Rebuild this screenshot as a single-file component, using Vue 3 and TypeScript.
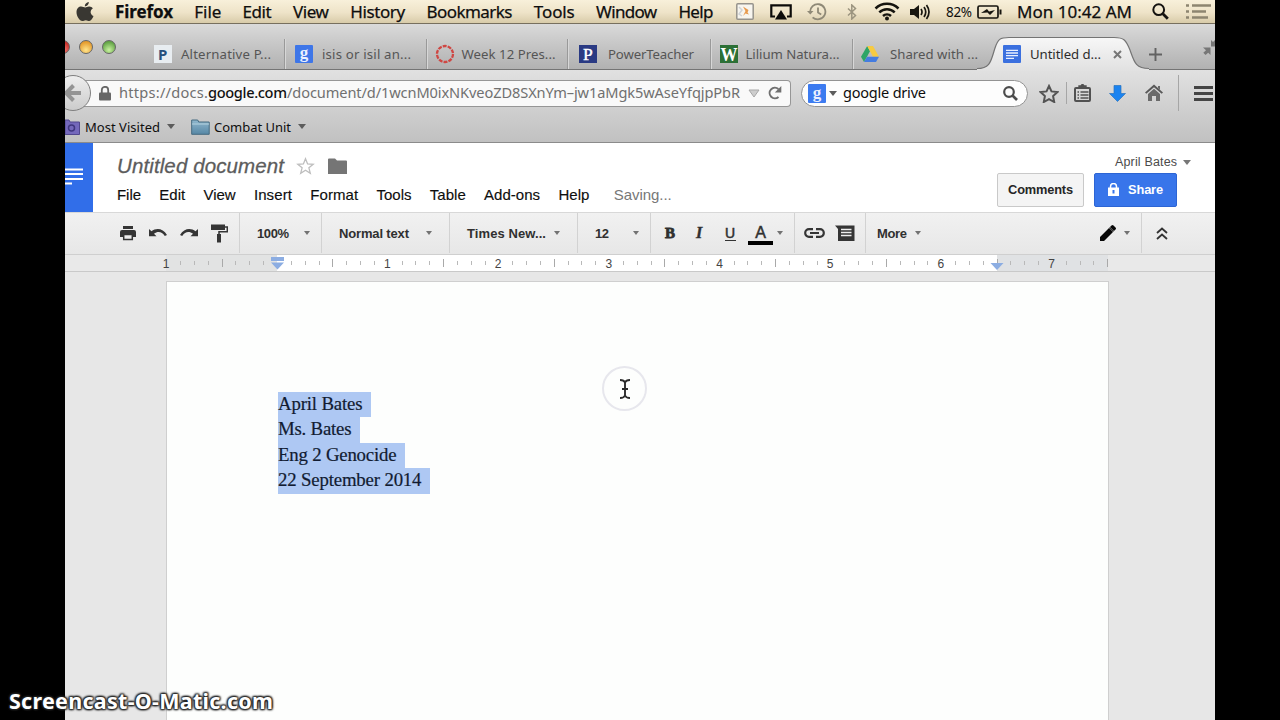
<script setup lang="ts">
import type { Directive } from 'vue'

// Tracks a label out (or in) so that it fills the given width in pixels.
const vFit: Directive<HTMLElement, number> = {
  mounted(el, { value }) {
    const natural = el.getBoundingClientRect().width
    const count = (el.textContent ?? '').trim().length
    el.style.letterSpacing = `${(value - natural) / Math.max(count - 1, 1)}px`
    el.style.width = `${value}px`
  },
}

const macMenus: [string, number][] = [
  ['Firefox', 58], ['File', 27], ['Edit', 29], ['View', 36], ['History', 55],
  ['Bookmarks', 86], ['Tools', 41], ['Window', 61], ['Help', 35],
]

interface Tab { icon: string; label: string; width: number }
const tabs: Tab[] = [
  { icon: 'pbs', label: 'Alternative P...', width: 90 },
  { icon: 'google', label: 'isis or isil an...', width: 89 },
  { icon: 'ring', label: 'Week 12 Pres...', width: 94 },
  { icon: 'power', label: 'PowerTeacher', width: 86 },
  { icon: 'wiki', label: 'Lilium Natura...', width: 94 },
  { icon: 'drive', label: 'Shared with ...', width: 88 },
]

const docMenus: [string, number][] = [
  ['File', 24], ['Edit', 26], ['View', 32], ['Insert', 38], ['Format', 48],
  ['Tools', 35], ['Table', 36], ['Add-ons', 56], ['Help', 31],
]

const lines: [string, number, number][] = [
  ['April Bates', 84.5, 93], ['Ms. Bates', 73.5, 82], ['Eng 2 Genocide', 118.5, 127], ['22 September 2014', 143.5, 152],
]

const inch = 110.7
const origin = 212
const labels = [-1, 1, 2, 3, 4, 5, 6, 7].map((n) => ({ n: Math.abs(n), x: origin - 0.3 + n * inch }))
const ticks = Array.from({ length: 69 }, (_, i) => i - 8)
  .filter((i) => i % 8 !== 0 && i < 61)
  .map((i) => ({ x: Math.round(origin + (i * inch) / 8) + 0.5, tall: i % 4 === 0 }))
</script>

<template>
  <div class="frame">
    <main class="screen">
      <header class="macbar">
        <svg class="apple" width="18" height="20" viewBox="0 0 18 20"><path d="M12.8 0c.2 2-1.600 4.300-4 4.400C8.600 2.200 10.600.4 12.800 0zM9.300 5.500c1-.1 2.200-1 4-.9 1.500.1 2.700.7 3.500 1.800-3.200 2-2.700 6.200.7 7.500-.8 2.200-2.400 5-4.200 5.100-1.300 0-1.800-.8-3.500-.8s-2.200.8-3.400.8C3.500 19 .5 14.300.5 10.300c0-3.700 2.300-5.700 4.700-5.700 1.600 0 2.900.9 4.100.9z" fill="#393732"/></svg>
        <nav class="mac-menus">
          <span v-for="[name, w] in macMenus" :key="name" v-fit="w" :class="{ strong: name === 'Firefox' }">{{ name }}</span>
        </nav>
        <div class="mac-status">
          <svg width="18" height="17" viewBox="0 0 18 17"><rect x=".8" y=".8" width="16.400" height="15.400" rx="1" fill="#f7f5ef" stroke="#96938c" stroke-width="1.500"/><path d="M3 4l3 3-3 4 3 2" stroke="#d0d3d6" stroke-width="1.500" fill="none"/><path d="M7 3.500l5.500 3.500-1 2.500 1.500 2-3.500-1L7 13l2.500-5z" fill="#e79a4e"/></svg>
          <svg class="airplay" width="22" height="16" viewBox="0 0 22 16"><path d="M5 12.500H1.300V1.300h19.400v11.200H17" fill="none" stroke="#0c0b09" stroke-width="2.200"/><path d="M11 6l6 9.500H5z" fill="#0c0b09"/></svg>
          <svg class="history" width="20" height="18" viewBox="0 0 20 18"><path d="M3.200 9.500a7.600 7.600 0 1 1 2.400 4.800M11 4.500V9.500l3.200 2" fill="none" stroke="#8f8977" stroke-width="1.800"/><path d="M0 8h6.500L3.300 11.500z" fill="#8f8977"/></svg>
          <svg class="bluetooth" width="10" height="16" viewBox="0 0 10 16"><path d="M1 4.500l7.500 7L4.800 15V1l3.700 3.500L1 11.500" fill="none" stroke="#9b947f" stroke-width="1.500"/></svg>
          <svg class="wifi" width="26" height="19" viewBox="0 0 26 19"><g fill="none" stroke="#16140f" stroke-width="2.500"><path d="M1.500 6.500a16.500 16.500 0 0 1 23 0M5.300 10.300a11 11 0 0 1 15.400 0M9 14a5.800 5.800 0 0 1 8 0"/></g><circle cx="13" cy="16.600" r="2" fill="#16140f"/></svg>
          <svg class="volume" width="21" height="16" viewBox="0 0 21 16"><path d="M0 5h4l5-4v14l-5-4H0z" fill="#181610"/><path d="M11 5q2 3 0 6M14 3q3.500 5 0 10M16.500 1q5 7 0 14" fill="none" stroke="#181610" stroke-width="1.700"/></svg>
          <span v-fit="26" class="percent">82%</span>
          <svg class="battery" width="25" height="14" viewBox="0 0 25 14"><rect x="1" y="1" width="20" height="12" rx="1.500" fill="none" stroke="#17150f" stroke-width="1.700"/><path d="M22.500 4.500h2v5h-2zM4 8l6-4 2 2.500L18 5l-5 5-2.500-2.500z" fill="#17150f"/></svg>
          <span v-fit="115" class="clock">Mon 10:42 AM</span>
          <svg class="spotlight" width="17" height="17" viewBox="0 0 17 17"><circle cx="6.700" cy="6.700" r="5.400" fill="none" stroke="#151310" stroke-width="2"/><path d="M10.800 10.800l5 5" stroke="#151310" stroke-width="2.800"/></svg>
          <svg class="notify" width="25" height="17" viewBox="0 0 25 17"><path d="M0 2.500h3M0 8.500h3M0 14.500h3M6 2.500h19M6 8.500h14M6 14.500h16" stroke="#8d8570" stroke-width="2.600"/></svg>
        </div>
      </header>

      <div class="tabstrip">
        <div class="lights"><i class="red"></i><i class="amber"></i><i class="green"></i></div>
        <div v-for="tab in tabs" :key="tab.label" class="tab" :class="tab.icon">
          <svg v-if="tab.icon === 'pbs'" class="fav" viewBox="0 0 18 18"><rect width="18" height="18" fill="#e8edf1"/><text x="4" y="15" class="pbs-letter">P</text></svg>
          <svg v-else-if="tab.icon === 'google'" class="fav" viewBox="0 0 18 18"><rect width="18" height="18" rx="1" fill="#3e76e8"/><text x="9" y="13" class="g-letter">g</text></svg>
          <svg v-else-if="tab.icon === 'ring'" class="fav" viewBox="0 0 18 18"><circle cx="9" cy="9" r="8" fill="none" stroke="#cf4743" stroke-width="2.300" stroke-dasharray="3.900 1.126"/></svg>
          <svg v-else-if="tab.icon === 'power'" class="fav" viewBox="0 0 18 18"><rect width="18" height="18" fill="#2a3a83"/><text x="4" y="15" class="pt-letter">P</text></svg>
          <svg v-else-if="tab.icon === 'wiki'" class="fav" viewBox="0 0 18 18"><rect width="18" height="18" fill="#2c7036"/><text x="0.500" y="15.500" class="w-letter" textLength="17" lengthAdjust="spacingAndGlyphs">W</text></svg>
          <svg v-else class="fav" viewBox="0 0 18 18"><path d="M6.200 1L0 11.800l3 5.200L9 6.200z" fill="#2da567"/><path d="M6.200 1h5.800l6 10.700h-6z" fill="#f6ca41"/><path d="M6 11.700h12L15 17H3z" fill="#447ce0"/></svg>
          <span v-fit="tab.width">{{ tab.label }}</span>
        </div>
        <div class="tab active">
          <svg class="tab-shape" width="174" height="35" viewBox="0 0 174 35"><defs><linearGradient id="tabfill" x2="0" y2="1"><stop offset="0" stop-color="#f7f7f7"/><stop offset="1" stop-color="#e1e1e1"/></linearGradient></defs><path d="M0 35V32.500C14 32.500 14 24 18 12C21 3 23 1.500 32 1.500H137C147 1.500 149 4 153 14C157 25 158 32.500 172 32.500V35z" fill="url(#tabfill)"/><path d="M0 32.500C14 32.500 14 24 18 12C21 3 23 1.500 32 1.500H137C147 1.500 149 4 153 14C157 25 158 32.500 172 32.500" fill="none" stroke="#747474" stroke-width="1.200"/></svg>
          <svg class="fav" viewBox="0 0 18 18"><rect width="18" height="18" rx="1" fill="#3b70df"/><path d="M3 5.300h12M3 8h12M3 10.700h12M3 13.300h8" stroke="#e9f0ff" stroke-width="1.300"/></svg>
          <span v-fit="71">Untitled d...</span>
          <svg class="close" width="9" height="9" viewBox="0 0 9 9"><path d="M1 1l7 7M8 1L1 8" stroke="#777" stroke-width="2"/></svg>
        </div>
        <svg class="plus" width="13" height="13" viewBox="0 0 13 13"><path d="M6.500 0v13M0 6.500h13" stroke="#626262" stroke-width="1.900"/></svg>
        <svg class="expand" width="14" height="17" viewBox="0 0 14 17"><path d="M0 8.500h7.500V16l-2.300-2.300L2.500 16 .3 13.800 3 11.200zM8 7.500V1l2 2 3-3 2 2-3 3 2.500 2.500z" fill="#777"/></svg>
      </div>

      <div class="navbar">
        <div class="urlbar">
          <div class="back"><svg width="18" height="18" viewBox="0 0 18 18"><path d="M9.500 1.500L2 9l7.500 7.500M2 9h15" fill="none" stroke="#949494" stroke-width="4"/></svg></div>
          <svg class="lock" width="12" height="15" viewBox="0 0 12 15"><rect y="6.500" width="12" height="8" rx="1" fill="#676767"/><path d="M2.800 7V4a3.200 3.200 0 0 1 6.400 0v3" fill="none" stroke="#676767" stroke-width="1.800"/></svg>
          <span class="url"><span v-fit="89">https://docs.</span><b v-fit="79">google.com</b><span v-fit="453">/document/d/1wcnM0ixNKveoZD8SXnYm–jw1aMgk5wAseYfqjpPbR</span></span>
          <svg class="drop" width="12" height="9" viewBox="0 0 12 9"><path d="M1 1h10L6 8z" fill="#cdcdcd" stroke="#a7a7a7"/></svg>
          <svg class="reload" width="14" height="14" viewBox="0 0 14 14"><path d="M10.500 10.900A5.300 5.300 0 1 1 10.400 3" fill="none" stroke="#707070" stroke-width="2"/><path d="M13.300 0v6.500H6.800z" fill="#707070"/></svg>
        </div>
        <div class="search">
          <svg class="g-icon" width="18" height="19" viewBox="0 0 18 19"><rect width="18" height="19" rx="1" fill="#3c7bf0"/><text x="9" y="13.500" class="g-letter">g</text></svg>
          <i class="caret"></i>
          <span v-fit="83">google drive</span>
          <svg class="glass" width="15" height="15" viewBox="0 0 15 15"><circle cx="6" cy="6" r="4.800" fill="none" stroke="#4c4c4c" stroke-width="2.200"/><path d="M9.500 9.500l4.500 4.500" stroke="#4c4c4c" stroke-width="2.700"/></svg>
        </div>
        <svg class="star" width="20" height="19" viewBox="0 0 20 19"><path d="M10 2l2.500 5.400 5.900.7-4.300 4 1.100 5.900L10 15.100 4.800 18l1.100-5.900-4.300-4 5.900-.7z" fill="none" stroke="#535353" stroke-width="2"/></svg>
        <i class="nav-line short"></i>
        <svg class="clip" width="17" height="18" viewBox="0 0 17 18"><rect x="1" y="4" width="15" height="13" rx="1" fill="none" stroke="#515151" stroke-width="2"/><path d="M5 4V2h2l1.500-2L10 2h2v2zM3.500 8h1.500M3.500 11h1.500M3.500 14h1.500M6.500 8h8M6.500 11h8M6.500 14h8" fill="#515151" stroke="#515151" stroke-width="1.400"/></svg>
        <svg class="download" width="17" height="17" viewBox="0 0 17 17"><path d="M5 .5h7v8h4.500l-8 8-8-8H5z" fill="#1b83f0" stroke="#2872bd" stroke-width=".7"/></svg>
        <svg class="home" width="18" height="18" viewBox="0 0 18 18"><path d="M9 .5l9 8-1.300 1.300L9 3.200 1.300 9.800 0 8.500z" fill="#585858"/><path d="M9 4.700l6 5.200V17h-4v-5H7v5H3V9.900zM13 2h2v4l-2-2z" fill="#6a6a6a"/></svg>
        <i class="nav-line"></i>
        <svg class="burger" width="19" height="15" viewBox="0 0 19 15"><path d="M0 1.500h19M0 7.500h19M0 13.500h19" stroke="#444" stroke-width="2.900"/></svg>
      </div>

      <div class="bookmarks">
        <svg class="visited-icon" width="15" height="16" viewBox="0 0 15 16"><path d="M0 1h4l1 2h9.500v12.500H0z" fill="#7468bb" stroke="#51478e"/><circle cx="6.500" cy="9" r="3" fill="none" stroke="#3f367e" stroke-width="1.500"/></svg>
        <span v-fit="75" class="visited">Most Visited</span><i class="caret"></i>
        <svg class="folder-icon" width="19" height="16" viewBox="0 0 19 16"><defs><linearGradient id="folderfill" x2="0" y2="1"><stop stop-color="#91b8ce"/><stop offset="1" stop-color="#5687a5"/></linearGradient></defs><path d="M.7 1h6l1 2h10.500v12.300H.7z" fill="url(#folderfill)" stroke="#456b80"/><path d="M1 5h17" stroke="#b4d2df"/></svg>
        <span v-fit="77" class="combat">Combat Unit</span><i class="caret"></i>
      </div>

      <section class="doc-head">
        <div class="doc-logo"><svg width="19" height="18" viewBox="0 0 19 18"><path d="M0 1.500h18M0 6h18M0 11h18M0 15.500h7" stroke="#fff" stroke-width="2"/></svg></div>
        <div class="doc-info">
          <div class="title-row">
            <span v-fit="167" class="title">Untitled document</span>
            <svg class="title-star" width="19" height="18" viewBox="0 0 19 18"><path d="M9.500 1.700l2.100 5.200 5.600.4-4.300 3.500 1.400 5.500-4.800-3-4.800 3 1.400-5.500L1.800 7.300l5.600-.4z" fill="none" stroke="#bdbdbd" stroke-width="1.300"/></svg>
            <svg width="19" height="17" viewBox="0 0 19 17"><path d="M0 1.500Q0 .5 1 .5h6l2 2h9q1 0 1 1V16H0z" fill="#757575"/></svg>
          </div>
          <nav class="doc-menus"><span v-for="[name, w] in docMenus" :key="name" v-fit="w">{{ name }}</span><span v-fit="58" class="saving">Saving...</span></nav>
        </div>
        <div class="account">
          <div class="user"><span v-fit="62">April Bates</span><i class="caret"></i></div>
          <div class="actions">
            <button class="comments"><span v-fit="65">Comments</span></button>
            <button class="share"><svg width="11" height="13" viewBox="0 0 11 13"><path d="M0 4.500h11V13H0zM4.500 7v3.500h2V7z" fill="#fff" fill-rule="evenodd"/><path d="M2.500 5V3.500a3 3 0 0 1 6 0V5" fill="none" stroke="#fff" stroke-width="1.500"/></svg><span v-fit="35">Share</span></button>
          </div>
        </div>
      </section>

      <div class="toolbar">
        <div class="group history-group">
          <svg width="16" height="15" viewBox="0 0 16 15"><path d="M3 0h10v3H3zM2 4h12q2 0 2 2v5h-3V8.500H3V11H0V6q0-2 2-2z" fill="#353535"/><path d="M3.700 8.500h8.600v5H3.700z" fill="#eee" stroke="#353535" stroke-width="1.500"/></svg>
          <svg width="18" height="11" viewBox="0 0 18 11"><path d="M0 1l2.500 2.300C7-.5 14 0 18 7l-2.200 1C13 3.300 8.500 3 5 5.800L7.500 8.300H0z" fill="#353535"/></svg>
          <svg width="18" height="11" viewBox="0 0 18 11"><path d="M18 1l-2.500 2.300C11-.5 4 0 0 7l2.200 1C5 3.300 9.500 3 13 5.800l-2.500 2.500H18z" fill="#353535"/></svg>
          <svg class="roller" width="17" height="19" viewBox="0 0 17 19"><path d="M0 .5h14v5.500H0zM6 10h4v8.500H6z" fill="#353535"/><path d="M14 3h2.300V7.800H8v3" fill="none" stroke="#353535" stroke-width="1.500"/></svg>
        </div>
        <div class="group zoom-group"><span v-fit="32">100%</span><i class="tcaret"></i></div>
        <div class="group style-group"><span v-fit="70">Normal text</span><i class="tcaret"></i></div>
        <div class="group font-group"><span v-fit="79">Times New...</span><i class="tcaret"></i></div>
        <div class="group size-group"><span v-fit="14">12</span><i class="tcaret"></i></div>
        <div class="group format-group">
          <b class="bold">B</b><em class="italic">I</em><span class="under">U</span><span class="color">A</span><i class="tcaret"></i>
        </div>
        <div class="group insert-group">
          <svg width="21" height="10" viewBox="0 0 21 10"><path d="M9 1.200H5a3.800 3.800 0 0 0 0 7.600h4M12 1.200h4a3.800 3.800 0 0 1 0 7.600h-4M6 5h9" fill="none" stroke="#353535" stroke-width="2.200"/></svg>
          <svg width="20" height="17" viewBox="0 0 20 17"><path d="M0 .5h19.500V16H3V4z" fill="#353535"/><path d="M6 4.500h10.500M6 7.500h10.500M6 10.500h10.500" stroke="#eee" stroke-width="1.300"/></svg>
        </div>
        <div class="group more-group"><span v-fit="30">More</span><i class="tcaret"></i>
          <div class="mode"><svg width="16" height="16" viewBox="0 0 16 16"><path d="M0 12L9 3l4 4-9 9H0zM10 2l1.500-1.500q1-1 2 0l2 2q1 1 0 2L14 6z" fill="#080808"/><path d="M9 3l1-1 4 4-1 1z" fill="#2c2c2c"/></svg><i class="tcaret"></i></div>
        </div>
        <div class="group collapse"><svg width="12" height="13" viewBox="0 0 12 13"><path d="M1 6l5-4.500L11 6M1 12l5-4.500 5 4.500" fill="none" stroke="#333" stroke-width="1.800"/></svg></div>
      </div>

      <svg class="ruler" width="1150" height="17" viewBox="0 0 1150 17">
        <rect width="1150" height="17" fill="#e9e9e9"/><rect x="101" width="111" height="17" fill="#e2e3e3"/><rect x="932" width="111" height="17" fill="#e0e2e4"/><rect x="212" width="720" height="17" fill="#fff"/>
        <path v-for="t in ticks" :key="t.x" :d="t.tall ? `M${t.x} 4v8` : `M${t.x} 6v4`" :stroke="t.tall ? '#a9a9a9' : '#b9b9b9'"/>
        <text v-for="l in labels" :key="l.x" :x="l.x" y="13" text-anchor="middle">{{ l.n }}</text>
        <path d="M206 2h13v4h-13zM206 7.500h13l-6.500 7z" fill="#8cade2"/><path d="M925.500 8h13l-6.500 7z" fill="#8cade2"/>
        <path d="M0 16.500h1150" stroke="#c9c9c9"/>
      </svg>

      <section class="canvas">
        <article class="page">
          <p v-for="[text, w, sel] in lines" :key="text" class="line"><span class="selection" :style="{ width: sel + 'px' }"><span v-fit="w">{{ text }}</span></span></p>
        </article>
      </section>
    </main>

    <div class="pointer"><svg width="12" height="20" viewBox="0 0 12 20"><path d="M1 1q4 0 5 2.500Q7 1 11 1M6 3v14M1 19q4 0 5-2.500Q7 19 11 19M3 10h6" fill="none" stroke="#2c2c2c" stroke-width="1.900"/></svg></div>
    <div class="watermark"><span v-fit="264">Screencast-O-Matic.com</span></div>
  </div>
</template>

<style>
body { background: #000; }
</style>

<style scoped>
.frame { position: relative; width: 1280px; height: 720px; background: #000; overflow: hidden; font-family: "Noto Sans", "Open Sans", sans-serif; color: #0e0e0e; }
.screen { width: 1150px; height: 720px; margin-left: 65px; overflow: hidden; display: flex; flex-direction: column; }
.screen > * { flex: none; }
span, b { white-space: nowrap; display: inline-block; flex: none; }
svg { display: block; flex: none; }

.macbar { height: 24px; box-sizing: border-box; display: flex; align-items: center; background: linear-gradient(#f8f0da, #eee3c8 55%, #d8cba9); border-bottom: 1px solid #776f5e; font-size: 17px; line-height: 22px; -webkit-text-stroke: .25px #0e0e0e; }
.apple { margin: 0 0 0 11px; }
.mac-menus { display: flex; gap: 21.300px; margin: 1px 0 0 21px; width: 599px; }
.strong { font-weight: 700; }
.mac-status { display: flex; align-items: center; margin-left: 22px; }
.airplay { margin-left: 16px; }
.history { margin-left: 15px; }
.bluetooth { margin-left: 20px; }
.wifi { margin-left: 17px; }
.volume { margin-left: 10px; }
.percent { margin-left: 15px; font-size: 13.500px; -webkit-text-stroke: 0; }
.battery { margin-left: 5px; }
.clock { margin-left: 15px; margin-top: 1px; }
.spotlight { margin-left: 20px; }
.notify { margin-left: 17px; }

.tabstrip { height: 46px; box-sizing: border-box; display: flex; align-items: flex-start; background: linear-gradient(#dadada, #c9c9c9 40%, #b1b1b1); border-bottom: 1px solid #747474; font-size: 13.200px; line-height: 18px; color: #555; }
.tabstrip > * { flex: none; }
.lights { display: flex; gap: 9px; width: 78px; margin-left: -9px; padding-top: 16px; }
.lights i { width: 14px; height: 14px; box-sizing: border-box; border-radius: 50%; border: 1px solid #666; }
.red { background: radial-gradient(circle at 50% 75%, #f5837b, #c9302b 70%); }
.amber { background: radial-gradient(circle at 50% 75%, #ffe58c, #e59a2c 75%); }
.green { background: radial-gradient(circle at 50% 75%, #c9f2a0, #61a344 75%); }
.tab { position: relative; display: flex; width: 142px; height: 30px; margin-top: 15px; padding: 6px 0 0 10px; box-sizing: border-box; border-right: 1px solid #999; box-shadow: 1px 0 #d7d7d7; }
.tab.pbs { width: 151px; padding-left: 20px; }
.tab.ring { width: 141px; padding-left: 9px; }
.tab.power { width: 143px; padding-left: 11px; }
.tab.wiki { padding-left: 9px; }
.tab.drive { width: 134px; padding-left: 8px; border: 0; box-shadow: none; }
.fav { width: 18px; height: 18px; margin-right: 9px; position: relative; overflow: visible; }
.google .fav { margin-right: 9px; }
.power .fav, .drive .fav { margin-right: 11px; }
.wiki .fav, .ring .fav { margin-right: 7.500px; }
.pbs-letter { font: 700 15px "Noto Sans", sans-serif; fill: #27517d; }
.g-letter { font: 700 17px "Liberation Serif", serif; fill: #eaf0ff; text-anchor: middle; }
.pt-letter { font: 17.500px "Liberation Serif", serif; fill: #fff; stroke: #fff; stroke-width: .4px; }
.w-letter { font: 700 19px "Liberation Serif", serif; fill: #fff; }
.tab.active { width: 158px; margin-top: 12px; padding: 9px 0 0 16px; border: 0; box-shadow: none; color: #2d2d2d; height: 33px; }
.active > span { position: relative; }
.tab-shape { position: absolute; left: -10px; top: 0; }
.close { position: relative; margin: 5px 0 0 12px; }
.plus { margin: 24px 0 0 4px; }
.expand { margin: 15px 0 0 41px; }

.navbar { height: 41px; display: flex; align-items: center; background: linear-gradient(#e1e1e1, #cecece); padding-top: 5px; box-sizing: border-box; }
.urlbar { width: 726px; height: 27px; box-sizing: border-box; border: 1px solid #969696; border-left: 0; border-radius: 0 4px 4px 0; background: #f9f9f9; display: flex; align-items: center; font-size: 14.600px; color: #707070; }
.back { width: 36px; height: 36px; margin-left: -10px; box-sizing: border-box; border-radius: 50%; border: 1px solid #7f7f7f; background: linear-gradient(#eee, #ccc); display: flex; align-items: center; padding-left: 8px; flex: none; }
.lock { margin-left: 8px; }
.url { display: flex; margin: 0 0 2px 8px; width: 621px; }
.url b { font-weight: 500; color: #111; }
.drop { margin-left: 8px; }
.reload { margin-left: 8px; }
.search { width: 227px; height: 27px; margin-left: 10px; border: 1px solid #939393; border-radius: 14px; box-sizing: border-box; background: #fdfdfd; display: flex; align-items: center; font-size: 14.500px; }
.g-icon { margin-left: 6px; overflow: visible; }
.caret { display: block; width: 0; height: 0; flex: none; border: 4px solid transparent; border-top: 5px solid #5c5c5c; border-bottom: 0; }
.search .caret { margin-left: 3px; }
.search span { margin: 0 0 2px 6px; }
.glass { margin-left: 77px; }
.star { margin-left: 11px; }
.nav-line { height: 36px; width: 1px; background: #a6a6a6; margin-left: 15px; }
.nav-line.short { height: 22px; margin-left: 7px; }
.clip { margin-left: 7px; }
.download { margin-left: 18px; }
.home { margin-left: 19px; }
.burger { margin-left: 15px; }

.bookmarks { height: 32px; box-sizing: border-box; border-bottom: 1px solid #8b8b8b; background: linear-gradient(#cecece, #c1c1c1); display: flex; align-items: center; font-size: 13px; }
.visited-icon { margin-right: 5px; }
.bookmarks .caret { margin-left: 7px; }
.folder-icon { margin: 0 4px 0 16px; }

.doc-head { height: 70px; box-sizing: border-box; display: flex; background: #fff; border-bottom: 1px solid #d8d8d8; font-family: "Liberation Sans", Arial, sans-serif; }
.doc-logo { width: 28px; height: 69px; background: #316ee9; padding-top: 25px; box-sizing: border-box; }
.doc-info { width: 700px; padding: 11px 0 0 24px; box-sizing: border-box; }
.title-row { display: flex; align-items: center; height: 24px; }
.title { font-size: 20.500px; font-style: italic; color: #5c5c5c; -webkit-text-stroke: .3px #5c5c5c; }
.title-star { margin: 0 13px 0 12px; }
.doc-menus { display: flex; gap: 18.300px; font-size: 15px; line-height: 20px; margin-top: 7px; -webkit-text-stroke: .15px #111; }
.saving { margin-left: 6px; color: #777; -webkit-text-stroke: 0; }
.account { margin-left: auto; margin-right: 24px; }
.user { display: flex; align-items: center; gap: 6px; justify-content: flex-end; font-size: 12.500px; line-height: 14px; color: #4b4b4b; margin-top: 12px; }
.user .caret { border-top-color: #777; }
.actions { display: flex; gap: 10px; margin: 4px 14px 0 0; }
button { font: 700 12.800px "Liberation Sans", Arial, sans-serif; padding: 0 0 2px; box-sizing: border-box; height: 34px; border-radius: 2px; display: flex; align-items: center; justify-content: center; }
.comments { width: 87px; border: 1px solid #c9c9c9; background: #f4f4f4; color: #262626; }
.share { width: 83px; gap: 9px; border: 1px solid #2d65d4; background: #3875ea; color: #fff; }

.toolbar { height: 41px; display: flex; background: linear-gradient(#f1f1f1, #e7e7e7); font: 700 13px "Liberation Sans", Arial, sans-serif; color: #303030; border-bottom: 1px solid #cfcfcf; }
.group { display: flex; align-items: center; box-sizing: border-box; height: 40px; border-right: 1px solid #d2d2d2; }
.tcaret { width: 0; height: 0; border: 3.500px solid transparent; border-top: 4px solid #727272; border-bottom: 0; flex: none; }
.history-group { width: 175px; padding-left: 55px; gap: 13px; }
.zoom-group { width: 82px; padding-left: 17px; gap: 15px; }
.style-group { width: 128px; padding-left: 17px; gap: 17px; }
.font-group { width: 128px; padding-left: 17px; gap: 8px; }
.size-group { width: 73px; padding-left: 17px; gap: 24px; }
.format-group { width: 144px; padding-left: 14px; }
.bold { font: 700 15px "Liberation Serif", serif; width: 30px; -webkit-text-stroke: .8px #303030; }
.italic { font: italic 700 16px "Liberation Serif", serif; width: 30px; text-indent: 1px; -webkit-text-stroke: .4px #303030; }
.under { font-size: 14px; font-weight: 400; width: 11px; border-bottom: 1.500px solid #333; line-height: 14px; -webkit-text-stroke: .5px #303030; }
.color { font-size: 16px; font-weight: 400; width: 25px; margin: 3px 4px 0 12px; line-height: 17px; text-align: center; border-bottom: 4px solid #000; -webkit-text-stroke: .5px #303030; }
.insert-group { width: 71px; padding-left: 9px; gap: 10px; }
.more-group { width: 276px; padding-left: 11px; gap: 8px; }
.mode { display: flex; align-items: center; gap: 8px; margin-left: auto; margin-right: 11px; }
.collapse { border: 0; padding-left: 14px; }
.ruler text { font: 12px "Liberation Sans", Arial, sans-serif; fill: #444; }

.canvas { height: 449px; padding: 10px 0 0 102px; box-sizing: border-box; background: #e7e7e7; }
.page { width: 941px; height: 440px; background: #fdfefd; box-sizing: border-box; padding: 110px 0 0 111px; box-shadow: 0 0 0 1px #cfcfcf; font: 18.800px/23.400px "Liberation Serif", serif; color: #111b31; -webkit-text-stroke: .2px #111b31; }
.line { margin: 0; height: 25.400px; }
.selection { height: 25.400px; background: #aec8f3; }

.pointer { position: absolute; left: 602px; top: 366px; width: 45px; height: 45px; box-sizing: border-box; border: 2px solid #e7e7ed; border-radius: 50%; display: flex; align-items: center; justify-content: center; }
.watermark { position: absolute; left: 9px; top: 686px; font: 700 21.500px/30px "Noto Sans", sans-serif; color: #fff; text-shadow: 0 0 2px #222, 1px 1px 2px #222, -1px -1px 2px #222, 1px -1px 2px #222, -1px 1px 2px #222; }
</style>
